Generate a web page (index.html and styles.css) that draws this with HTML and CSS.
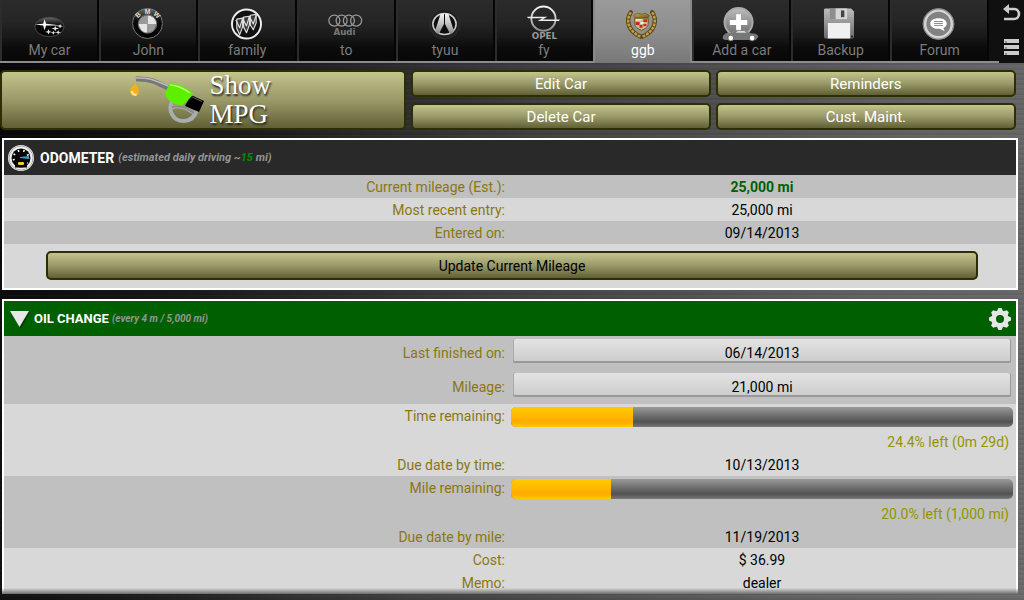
FILE: index.html
```html
<!DOCTYPE html>
<html lang="en">
<head>
  <meta charset="UTF-8">
  <meta name="viewport" content="width=device-width, initial-scale=1.0">
  <title>Car Maintenance</title>
  <link rel="stylesheet" href="styles.css">
</head>
<body>
  <!-- Shared gradients for the icons -->
  <svg class="defs" width="0" height="0" aria-hidden="true">
    <defs>
      <linearGradient id="silver" x1="0" y1="0" x2="0" y2="1">
        <stop offset="0" stop-color="#f4f4f4"/>
        <stop offset="1" stop-color="#8c8c8c"/>
      </linearGradient>
      <linearGradient id="steel" x1="0" y1="0" x2="0" y2="1">
        <stop offset="0" stop-color="#bdbdbd"/>
        <stop offset="1" stop-color="#6a6a6a"/>
      </linearGradient>
      <linearGradient id="coal" x1="0" y1="0" x2="0" y2="1">
        <stop offset="0" stop-color="#6a6a6a"/>
        <stop offset="0.4" stop-color="#0c0c0c"/>
        <stop offset="1" stop-color="#000"/>
      </linearGradient>
      <linearGradient id="gold" x1="0" y1="0" x2="1" y2="1">
        <stop offset="0" stop-color="#c9a94c"/>
        <stop offset="1" stop-color="#6f5512"/>
      </linearGradient>
    </defs>
  </svg>

  <header class="topbar">
    <nav class="tabs">
      <a href="#" class="tab">
        <svg class="tab-icon" viewBox="0 0 98 46">
          <ellipse cx="49" cy="27" rx="15" ry="10" fill="url(#coal)" stroke="#4a4a4a"/>
          <path d="M34 24.500l8.500-.8 1.500-4.500 1.500 4.500 16 2-16-.2-1.500 5-1.500-5z" fill="#fff"/>
          <g fill="#e4e4e4">
            <path d="M55 26l1 2 3 .7-3 .7-1 2-1-2-3-.7 3-.7z"/>
            <path d="M60 24l.8 1.700 2.200.6-2.200.6-.8 1.700-.8-1.700-2.200-.6 2.200-.6z"/>
            <path d="M48 29.500l1 2 2.500.7-2.500.7-1 2-1-2-2.500-.7 2.500-.7z"/>
            <path d="M58 30.500l.8 1.500 2.200.6-2.200.6-.8 1.500-.8-1.500-2.200-.6 2.200-.6z"/>
            <path d="M53 31l.8 1.500 2.200.6-2.200.6-.8 1.500-.8-1.500-2.200-.6 2.200-.6z"/>
          </g>
        </svg>
        <span class="tab-label">My car</span>
      </a>
      <a href="#" class="tab">
        <svg class="tab-icon" viewBox="0 0 98 46">
          <circle cx="48" cy="23.500" r="15.500" fill="url(#coal)" stroke="#777"/>
          <circle cx="48" cy="24" r="9.500" fill="#111" stroke="#777"/>
          <path d="M48 24v-9a9 9 0 0 0-9 9zM48 24v9a9 9 0 0 0 9-9z" fill="#999"/>
          <path d="M48 24v-9a9 9 0 0 1 9 9zM48 24v9a9 9 0 0 1-9-9z" fill="#e4e4e4"/>
          <g class="bmw">
            <text x="38.500" y="17" transform="rotate(-42 38.500 15)">B</text>
            <text x="48" y="14">M</text>
            <text x="57.500" y="17" transform="rotate(42 57.500 15)">W</text>
          </g>
        </svg>
        <span class="tab-label">John</span>
      </a>
      <a href="#" class="tab">
        <svg class="tab-icon" viewBox="0 0 98 46">
          <circle cx="48" cy="24" r="15" fill="#111" stroke="#eee" stroke-width="2"/>
          <g fill="#3a3a3a" stroke="#ddd" stroke-width="1.200" stroke-linejoin="round">
            <path d="M38 19l6-1v9l-3 8-3-6z"/>
            <path d="M45 17l6-1v9l-3 8-3-6z"/>
            <path d="M52 15l6-1v9l-3 7-3-5z"/>
            <path d="M37 20l4 8 3-10 4 8 3-10 4 8 3-9" fill="none"/>
          </g>
        </svg>
        <span class="tab-label">family</span>
      </a>
      <a href="#" class="tab">
        <svg class="tab-icon" viewBox="0 0 98 46">
          <g fill="none" stroke="#999" stroke-width="1.300">
            <circle cx="36.500" cy="20.500" r="5.700"/>
            <circle cx="44" cy="20.500" r="5.700"/>
            <circle cx="51.500" cy="20.500" r="5.700"/>
            <circle cx="59" cy="20.500" r="5.700"/>
          </g>
          <text class="brand-text" x="47" y="35" fill="#777">Audi</text>
        </svg>
        <span class="tab-label">to</span>
      </a>
      <a href="#" class="tab">
        <svg class="tab-icon" viewBox="0 0 98 46">
          <circle cx="48" cy="24" r="15.500" fill="#202020" stroke="#303030"/>
          <ellipse cx="48" cy="24" rx="12" ry="10.800" fill="#0d0d0d" stroke="#ccc" stroke-width="1.600"/>
          <path d="M44 13.500h3.500V24L42 34.500 38 32z" fill="url(#silver)"/>
          <path d="M52 13.500h-3.500V24L54 34.500 58 32z" fill="url(#silver)"/>
        </svg>
        <span class="tab-label">tyuu</span>
      </a>
      <a href="#" class="tab">
        <svg class="tab-icon" viewBox="0 0 98 46">
          <circle cx="48" cy="18.500" r="12.500" fill="none" stroke="url(#silver)" stroke-width="2"/>
          <path d="M31 16.500h21l-5 3h18l-1 1.500H42l5-3H32z" fill="#eee"/>
          <text class="brand-text" x="49" y="40" fill="#999">OPEL</text>
        </svg>
        <span class="tab-label">fy</span>
      </a>
      <a href="#" class="tab active" aria-current="page">
        <svg class="tab-icon" viewBox="0 0 98 46">
          <g fill="none" stroke="#5d4712" stroke-width="4.500" stroke-linecap="round">
            <path d="M37 12c-5 7-4 19 10 25M59 12c5 7 4 19-10 25"/>
          </g>
          <g fill="none" stroke="#c2a04a" stroke-width="2.500" stroke-dasharray="3 1">
            <path d="M37 12c-5 7-4 19 10 25M59 12c5 7 4 19-10 25"/>
          </g>
          <path d="M40 15l4-2 4 1 4-1 4 2-1.500 3h-13z" fill="url(#gold)" stroke="#5d4712" stroke-width=".6"/>
          <path d="M41 18h14v5c0 4-3 6-7 7.500-4-1.500-7-3.500-7-7.500z" fill="#c9b98a" stroke="#6f5512"/>
          <path d="M42 22h4v3h-4zM50 19h4v3h-4zM46 25h3v3h-3zM50 24h3v2h-3z" fill="#d0202c"/>
          <path d="M42 19h6v1.500h-6zM47 22h3v2h-3z" fill="#eee"/>
        </svg>
        <span class="tab-label">ggb</span>
      </a>
      <a href="#" class="tab">
        <svg class="tab-icon" viewBox="0 0 98 46">
          <circle cx="46" cy="22" r="14.500" fill="url(#steel)" stroke="#aaa" stroke-width="2"/>
          <path d="M43.500 14h5v6h6.500v5h-6.500v6h-5v-6h-6.500v-5h6.500z" fill="#fff"/>
          <path d="M30 39c0-4 3-6 9-6l4-2.500h10l5 3.500c5 0 8 1 8 3l-2 3H32z" fill="#777" stroke="#999" stroke-width=".6"/>
          <path d="M43 33l2-1.800h7l2.500 1.800z" fill="#ddd"/>
          <circle cx="38" cy="38.500" r="3" fill="#fff" stroke="#666"/>
          <circle cx="60" cy="38.500" r="3" fill="#fff" stroke="#666"/>
        </svg>
        <span class="tab-label">Add a car</span>
      </a>
      <a href="#" class="tab">
        <svg class="tab-icon" viewBox="0 0 98 46">
          <path d="M33 8h27l3 3v26.500a1.500 1.500 0 0 1-1.500 1.500h-28a1.500 1.500 0 0 1-1.500-1.500V9z" fill="url(#steel)"/>
          <path d="M38 8h18v11H38z" fill="#8e8e8e"/>
          <path d="M44 8h12v11H44z" fill="#d6d6d6"/>
          <path d="M49.500 10h3.500v7h-3.500z" fill="#444"/>
          <path d="M36 23h23v16H36z" fill="#f0f0f0"/>
          <path d="M60 36h2v2h-2z" fill="#222"/>
        </svg>
        <span class="tab-label">Backup</span>
      </a>
      <a href="#" class="tab">
        <svg class="tab-icon" viewBox="0 0 98 46">
          <circle cx="48" cy="24" r="16" fill="#7c7c7c" stroke="#8c8c8c"/>
          <circle cx="48" cy="24" r="13.800" fill="#828282" stroke="#d4d4d4" stroke-width="2.500"/>
          <path d="M48 18c5 0 8.500 2.300 8.500 5.500 0 2-1.500 3.700-3.500 4.700l1.500 3.300-5-2.500H48c-5 0-8.500-2.300-8.500-5.500S43 18 48 18z" fill="#fff"/>
          <path d="M43.500 21.500h9M43.500 23.500h9M43.500 25.500h9" stroke="#888" fill="none"/>
        </svg>
        <span class="tab-label">Forum</span>
      </a>
    </nav>
    <div class="system-keys">
      <button type="button" class="icon-btn" aria-label="Back">
        <svg width="18" height="18" viewBox="0 0 18 18">
          <path d="M5 5h6a4.500 4.500 0 0 1 0 10H1" fill="none" stroke="#ccc" stroke-width="2.600"/>
          <path d="M0 5l6-5v10z" fill="#ccc"/>
        </svg>
      </button>
      <button type="button" class="icon-btn" aria-label="Menu">
        <svg width="18" height="18" viewBox="0 0 18 18">
          <path d="M1 1h15v4H1zM1 7h15v4H1zM1 13h15v4H1z" fill="#ccc"/>
          <path d="M2 4h2M2 10h2M2 16h2" stroke="#555"/>
        </svg>
      </button>
    </div>
  </header>

  <main class="content">
    <div class="actions">
      <button type="button" class="btn btn-mpg">
        <svg class="nozzle" width="76" height="50" viewBox="0 0 76 50">
          <path d="M42 26c-4 9 0 20 12 20 7 0 11-5 13-11M42 32c8-2 14 0 22 6" fill="none" stroke="#a9adad" stroke-width="4"/>
          <path d="M42 32c8-2 14 0 22 6" fill="none" stroke="#8a8a80" stroke-width="2"/>
          <path d="M6 4c14-1 22 4 32 9" fill="none" stroke="#777" stroke-width="5"/>
          <path d="M6 3c14-1 22 4 32 8" fill="none" stroke="#bbb" stroke-width="1.500"/>
          <path d="M61 20l13 6-5 11-14-6z" fill="#000"/>
          <path d="M62 22l10 4.500" stroke="#666"/>
          <path d="M40 8c6 0 14 3 22 9l1 3-10 10c-8 1-17-5-18-12z" fill="#5dee00"/>
          <path d="M40 10c7 0 13 3 20 8" fill="none" stroke="#b4ff7a" stroke-width="1.500"/>
          <path d="M5 7c1.500 4 4 6 4 9.500a4.500 4.500 0 0 1-9 0C0 13 4 11 5 7z" fill="#f5b016"/>
          <path d="M2 16c0 3 2 4 4.500 3.500" fill="none" stroke="#ffe9b0" stroke-width="2"/>
        </svg>
        <span class="mpg-text">Show<br>MPG</span>
      </button>
      <button type="button" class="btn">Edit Car</button>
      <button type="button" class="btn">Reminders</button>
      <button type="button" class="btn">Delete Car</button>
      <button type="button" class="btn">Cust. Maint.</button>
    </div>

    <section class="card">
      <div class="card-header">
        <svg width="26" height="26" viewBox="0 0 26 26">
          <circle cx="13" cy="13" r="13" fill="#eee"/>
          <circle cx="13" cy="13" r="12" fill="none" stroke="#aaa"/>
          <circle cx="13" cy="13" r="9.500" fill="#050505"/>
          <circle cx="13" cy="13" r="7.500" fill="none" stroke="#fff" stroke-width="2" stroke-dasharray="1.500 4" stroke-dashoffset="1" pathLength="47"/>
          <path d="M12 12l9-1v3l-9-1z" fill="#3a9bd0"/>
          <path d="M7 16.500h12v6H7z" fill="#050505"/>
          <rect x="10" y="17" width="6" height="3" rx="1" fill="#f0d020"/>
        </svg>
        <h2 class="card-title">ODOMETER</h2>
        <span class="card-note">(estimated daily driving ~<span class="good">15</span> mi)</span>
      </div>
      <table class="info">
        <tr class="dark"><th scope="row">Current mileage (Est.):</th><td class="estimate">25,000 mi</td></tr>
        <tr><th scope="row">Most recent entry:</th><td>25,000 mi</td></tr>
        <tr class="dark"><th scope="row">Entered on:</th><td>09/14/2013</td></tr>
      </table>
      <div class="card-footer">
        <button type="button" class="btn btn-update">Update Current Mileage</button>
      </div>
    </section>

    <section class="card card-last">
      <div class="card-header green">
        <button type="button" class="icon-btn" aria-label="Collapse">
          <svg width="22" height="20" viewBox="0 0 22 20">
            <path d="M4 3h18l-9 17z" fill="#003c00"/>
            <path d="M2 2h19l-9.500 16z" fill="#e8e8e8"/>
          </svg>
        </button>
        <h2 class="card-title title-oil">OIL CHANGE</h2>
        <span class="card-note note-small">(every 4 m / 5,000 mi)</span>
        <button type="button" class="icon-btn gear" aria-label="Settings">
          <svg width="24" height="24" viewBox="-12 -12 24 24">
            <g fill="#e6e6e6">
              <circle r="8.500"/>
              <path id="tooth" d="M-3-8l1.500-3h3l1.500 3v16l-1.500 3h-3l-1.500-3z"/>
              <use href="#tooth" transform="rotate(45)"/>
              <use href="#tooth" transform="rotate(90)"/>
              <use href="#tooth" transform="rotate(135)"/>
            </g>
            <circle r="4" fill="#006000"/>
          </svg>
        </button>
      </div>
      <table class="info">
        <tr class="dark field"><th scope="row">Last finished on:</th><td><button type="button" class="picker">06/14/2013</button></td></tr>
        <tr class="dark field"><th scope="row">Mileage:</th><td><button type="button" class="picker">21,000 mi</button></td></tr>
        <tr class="meter"><th scope="row">Time remaining:</th><td><div class="bar"><div class="bar-fill" style="width: 24.4%"></div></div></td></tr>
        <tr><td class="left" colspan="2">24.4% left (0m 29d)</td></tr>
        <tr><th scope="row">Due date by time:</th><td>10/13/2013</td></tr>
        <tr class="dark meter"><th scope="row">Mile remaining:</th><td><div class="bar"><div class="bar-fill" style="width: 20%"></div></div></td></tr>
        <tr class="dark"><td class="left" colspan="2">20.0% left (1,000 mi)</td></tr>
        <tr class="dark"><th scope="row">Due date by mile:</th><td>11/19/2013</td></tr>
        <tr><th scope="row">Cost:</th><td>$ 36.99</td></tr>
        <tr><th scope="row">Memo:</th><td>dealer</td></tr>
      </table>
    </section>
  </main>
</body>
</html>
```
FILE: styles.css
```css
:root {
  --olive-border: #2e2e05;
  --label: #8a7712;
  --row-light: #d8d8d8;
  --row-dark: #c0c0c0;
}

* {
  margin: 0;
  padding: 0;
  box-sizing: border-box;
}

body {
  font-family: Roboto, sans-serif;
  font-size: 14px;
  color: #000;
  min-height: 100vh;
  overflow: hidden;
  /* brushed metal */
  background:
    repeating-linear-gradient(180deg, rgba(255, 255, 255, 0.02) 0, rgba(255, 255, 255, 0.02) 1px, transparent 1px, transparent 3px, rgba(0, 0, 0, 0.06) 3px, rgba(0, 0, 0, 0.06) 5px),
    linear-gradient(105deg, #060606 0%, #181818 22%, #404040 48%, #626262 80%, #6c6c6c 100%);
}

button {
  font: inherit;
  border: none;
  background: none;
  cursor: pointer;
}

.defs {
  position: absolute;
}

/* Top bar */
.topbar {
  display: flex;
  background: #101010;
}

.tabs {
  flex: 1;
  display: flex;
  padding-right: 10px;
  border-bottom: 2px solid #8c8c8c;
}

.tab {
  flex: 1;
  min-width: 0;
  display: flex;
  flex-direction: column;
  align-items: center;
  height: 61px;
  border-left: 2px solid #2c2c2c;
  border-right: 2px solid #050505;
  background: linear-gradient(180deg, #2b2b2b 0%, #252525 35%, #191919 60%, #0b0b0b 78%, #080808 100%);
  color: #7c7c7c;
  text-decoration: none;
}

.tab.active {
  height: 63px;
  margin-bottom: -2px;
  border-color: #888;
  background: linear-gradient(180deg, #9a9a9a 0%, #8e8e8e 50%, #787878 100%);
  color: #fff;
}

.tab-icon {
  width: 100%;
  height: 46px;
  flex: none;
}

.tab-label {
  margin-top: -4px;
  line-height: 16px;
}

.bmw {
  font: bold 7px "Liberation Sans", sans-serif;
  fill: #ddd;
  text-anchor: middle;
}

.brand-text {
  font: bold 9px "DejaVu Sans", sans-serif;
  text-anchor: middle;
}

.system-keys {
  width: 25px;
  display: flex;
  flex-direction: column;
  justify-content: space-between;
  padding: 4px 0 7px 4px;
}

.icon-btn {
  display: flex;
}

/* Buttons */
.content {
  padding-top: 7px;
}

.actions {
  display: grid;
  grid-template-columns: 406fr 299fr 300fr;
  grid-template-rows: 27px 27px;
  gap: 6px 5px;
  padding-right: 8px;
}

.btn {
  border: 2px solid var(--olive-border);
  border-radius: 5px;
  background: linear-gradient(180deg, #c4c48c 0%, #99996a 50%, #606034 100%);
  color: #fff;
  font-size: 15px;
}

.btn-mpg {
  grid-row: span 2;
  display: flex;
  align-items: center;
  justify-content: center;
  gap: 3px;
  padding-right: 5px;
}

.mpg-text {
  font-family: "Liberation Serif", serif;
  font-size: 27px;
  line-height: 29px;
  text-align: left;
  text-shadow: 1px 2px 2px #222;
}

/* Cards */
.card {
  margin: 8px 6px 0 2px;
  border: 2px solid #fff;
  background: var(--row-light);
}

.card-last {
  position: relative;
  margin-top: 9px;
  border-bottom: none;
}

.card-last::after {
  content: "";
  position: absolute;
  left: -2px;
  right: -2px;
  bottom: 0;
  height: 6px;
  background: linear-gradient(180deg, rgba(110, 110, 110, 0), #6e6e6e);
}

.card-header {
  display: flex;
  align-items: center;
  height: 35px;
  padding: 0 4px;
  background: #292929;
}

.card-header.green {
  background: #006000;
}

.card-title {
  margin: 0 4px 0 6px;
  font-size: 14px;
  font-weight: 700;
  color: #fff;
}

.title-oil {
  margin: 0 3px 0 4px;
  font-size: 13px;
}

.card-note {
  font-size: 11px;
  font-weight: 700;
  font-style: italic;
  color: #959595;
}

.note-small {
  font-size: 10px;
}

.good {
  color: #009000;
}

.gear {
  margin-left: auto;
}

.card-footer {
  padding: 7px 38px 8px 42px;
}

.btn-update {
  display: block;
  width: 100%;
  height: 29px;
  color: #000;
  font-size: 14px;
}

/* Tables */
.info {
  width: 100%;
  border-collapse: collapse;
  table-layout: fixed;
}

.info tr {
  height: 23px;
}

.info .dark {
  background: var(--row-dark);
}

.info th {
  padding-right: 5px;
  font-weight: 400;
  text-align: right;
  color: var(--label);
}

.info td {
  padding-right: 2px;
  text-align: center;
}

.info .estimate {
  font-weight: 700;
  color: #006000;
}

.info .left {
  padding-right: 7px;
  text-align: right;
  color: #949400;
}

.info .field {
  height: 34px;
}

.info .field td {
  padding: 0 5px 4px 3px;
}

.picker {
  display: block;
  width: 100%;
  height: 24px;
  padding-top: 4px;
  border-radius: 2px;
  background: linear-gradient(180deg, #e3e3e3, #cbcbcb);
  box-shadow: inset 0 -2px 0 #999, inset -1px 0 0 #999, inset 1px 0 0 #aaa;
}

.info .meter {
  height: 26px;
}

.meter th {
  vertical-align: top;
  line-height: 24px;
}

.info .meter td {
  padding: 3px 3px 3px 1px;
  vertical-align: top;
}

.bar {
  height: 20px;
  border-radius: 5px;
  overflow: hidden;
  background: linear-gradient(180deg, #999 0%, #686868 50%, #525252 75%, #787878 100%);
}

.bar-fill {
  height: 100%;
  background: linear-gradient(180deg, #fc0 0%, #fa0 75%, #fc0 100%);
}
```
